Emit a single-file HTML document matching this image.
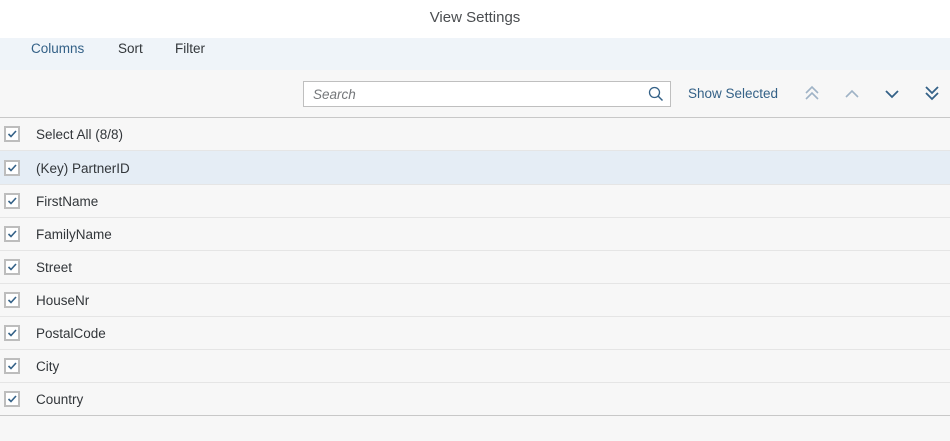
<!DOCTYPE html><html><head><style>
body{margin:0;width:950px;height:441px;background:#f7f7f7;font-family:"Liberation Sans",sans-serif;position:relative;overflow:hidden;color:#32363a}
.a{position:absolute}
.title{left:0;top:0;width:950px;height:38px;background:#fff;text-align:center;line-height:36px;font-size:15px;color:#4a4d50}
.tabs{left:0;top:38px;width:950px;height:32px;background:#eff4f9;font-size:13.5px}
.tabs span{position:absolute;top:3px}
.row{position:absolute;left:0;width:950px;height:32px;border-bottom:1px solid #e5e5e5;font-size:13.5px;background:#f7f7f7}
.row .t{position:absolute;left:36px;top:9px}
.cb{position:absolute;left:4px;top:8px;width:12px;height:12px;border:2px solid #bdbdbd;background:#fff}
.cb svg{position:absolute;left:0;top:0}
</style></head><body>
<div class="a title">View Settings</div>
<div class="a tabs"><span style="left:31px;color:#346187">Columns</span><span style="left:118px">Sort</span><span style="left:175px">Filter</span></div>
<div class="a" style="left:0;top:117px;width:950px;height:1px;background:#c8c8c8"></div>
<div class="a" style="left:303px;top:81px;width:366px;height:24px;border:1px solid #bfbfbf;background:#fff"><span class="a" style="left:9px;top:5px;font-style:italic;color:#74777a;font-size:13.5px">Search</span>
<svg class="a" style="left:344px;top:4px" width="16" height="16" viewBox="0 0 16 16"><circle cx="6.5" cy="6.5" r="5" fill="none" stroke="#346187" stroke-width="1.3"/><path d="M10 10L14.5 14.5" stroke="#346187" stroke-width="1.5"/></svg></div>
<div class="a" style="left:688px;top:86px;font-size:13.5px;color:#346187">Show Selected</div>
<svg class="a" style="left:804px;top:85px" width="16" height="18" viewBox="0 0 16 18"><path d="M2 8L8 2L14 8M2 14L8 8L14 14" fill="none" stroke="#9fb3c6" stroke-width="1.6"/></svg>
<svg class="a" style="left:844px;top:85px" width="16" height="18" viewBox="0 0 16 18"><path d="M2 12L8 6L14 12" fill="none" stroke="#9fb3c6" stroke-width="1.6"/></svg>
<svg class="a" style="left:884px;top:85px" width="16" height="18" viewBox="0 0 16 18"><path d="M2 6L8 12L14 6" fill="none" stroke="#346187" stroke-width="1.8"/></svg>
<svg class="a" style="left:924px;top:84px" width="16" height="18" viewBox="0 0 16 18"><path d="M2 3L8 9L14 3M2 9L8 15L14 9" fill="none" stroke="#346187" stroke-width="1.8"/></svg>

<div class="row" style="top:118px"><div class="cb"><svg width="12" height="12" viewBox="0 0 12 12"><path d="M2.5 6L5 8.5L10 3" fill="none" stroke="#346187" stroke-width="1.6"/></svg></div><span class="t">Select All (8/8)</span></div>
<div class="row" style="top:151px;height:33px;background:#e5edf5"><div class="cb" style="top:9px"><svg width="12" height="12" viewBox="0 0 12 12"><path d="M2.5 6L5 8.5L10 3" fill="none" stroke="#346187" stroke-width="1.6"/></svg></div><span class="t" style="top:10px">(Key) PartnerID</span></div>
<div class="row" style="top:185px"><div class="cb"><svg width="12" height="12" viewBox="0 0 12 12"><path d="M2.5 6L5 8.5L10 3" fill="none" stroke="#346187" stroke-width="1.6"/></svg></div><span class="t">FirstName</span></div>
<div class="row" style="top:218px"><div class="cb"><svg width="12" height="12" viewBox="0 0 12 12"><path d="M2.5 6L5 8.5L10 3" fill="none" stroke="#346187" stroke-width="1.6"/></svg></div><span class="t">FamilyName</span></div>
<div class="row" style="top:251px"><div class="cb"><svg width="12" height="12" viewBox="0 0 12 12"><path d="M2.5 6L5 8.5L10 3" fill="none" stroke="#346187" stroke-width="1.6"/></svg></div><span class="t">Street</span></div>
<div class="row" style="top:284px"><div class="cb"><svg width="12" height="12" viewBox="0 0 12 12"><path d="M2.5 6L5 8.5L10 3" fill="none" stroke="#346187" stroke-width="1.6"/></svg></div><span class="t">HouseNr</span></div>
<div class="row" style="top:317px"><div class="cb"><svg width="12" height="12" viewBox="0 0 12 12"><path d="M2.5 6L5 8.5L10 3" fill="none" stroke="#346187" stroke-width="1.6"/></svg></div><span class="t">PostalCode</span></div>
<div class="row" style="top:350px"><div class="cb"><svg width="12" height="12" viewBox="0 0 12 12"><path d="M2.5 6L5 8.5L10 3" fill="none" stroke="#346187" stroke-width="1.6"/></svg></div><span class="t">City</span></div>
<div class="row" style="top:383px;border-bottom-color:#c8c8c8"><div class="cb"><svg width="12" height="12" viewBox="0 0 12 12"><path d="M2.5 6L5 8.5L10 3" fill="none" stroke="#346187" stroke-width="1.6"/></svg></div><span class="t">Country</span></div>
</body></html>
